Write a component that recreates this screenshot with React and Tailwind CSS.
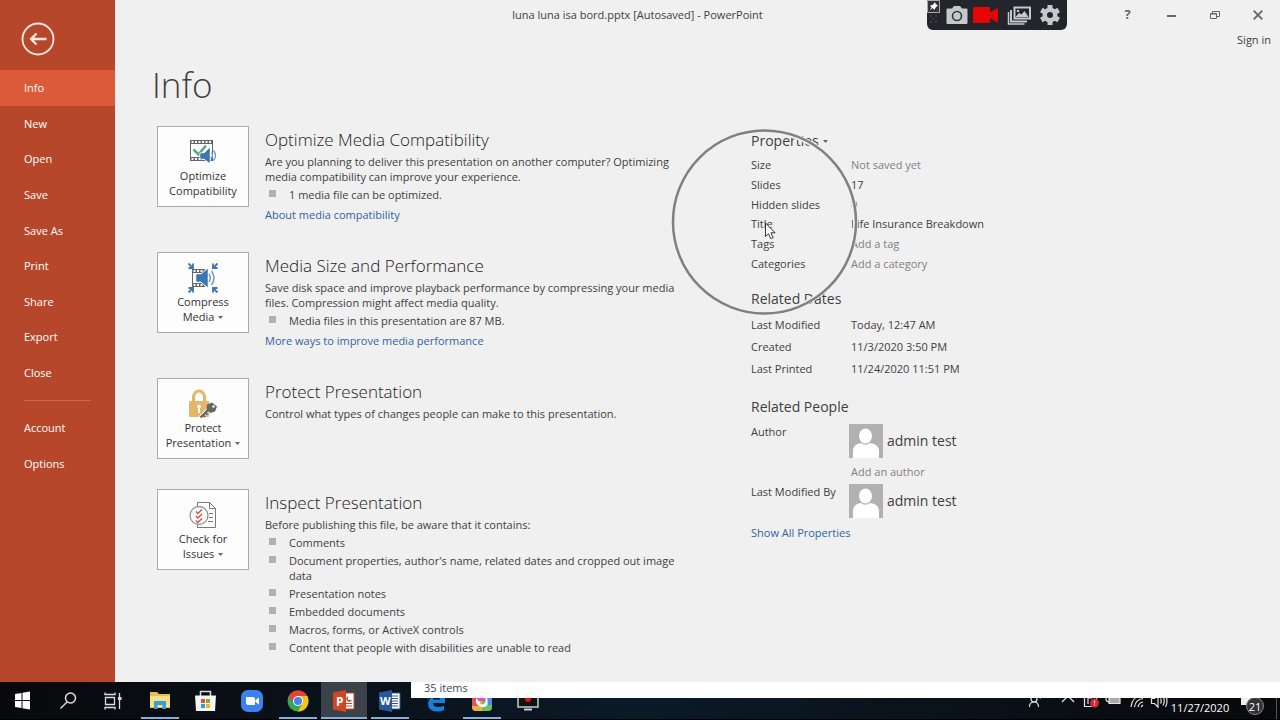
import clsx from "clsx";

const NAV_ITEMS = ["Info", "New", "Open", "Save", "Save As", "Print", "Share", "Export", "Close"];

const PROPERTIES = [
  { label: "Size", value: "Not saved yet", muted: true },
  { label: "Slides", value: "17" },
  { label: "Hidden slides", value: "0" },
  { label: "Title", value: "Life Insurance Breakdown" },
  { label: "Tags", value: "Add a tag", muted: true },
  { label: "Categories", value: "Add a category", muted: true },
];

const DATES = [
  { label: "Last Modified", value: "Today, 12:47 AM" },
  { label: "Created", value: "11/3/2020 3:50 PM" },
  { label: "Last Printed", value: "11/24/2020 11:51 PM" },
];

const OptimizeIcon = () => (
  <svg width="28" height="28" viewBox="0 0 28 28">
    <path d="M1.500 2.500h22v20h-22z" fill="#fff" stroke="#666" />
    <path d="M1 4h23M1 21h23" stroke="#666" strokeWidth="4" />
    <path d="M2.500 4h20M2.500 21h20" stroke="#fff" strokeWidth="2" strokeDasharray="2 1.500" />
    <path d="M4.500 11.500l5 5L17 7.500" fill="none" stroke="#5aa585" strokeWidth="2.500" />
    <path d="M11 15h4l6-6v17l-6-5h-4z" fill="#3a75b5" stroke="#fff" />
    <path d="M11.500 15.500h4l5-5v14l-5-4h-4z" fill="#3a75b5" />
    <path d="M22.500 14.500q2 3 0 6M24.500 12.500q4 5 0 10" fill="none" stroke="#6c9bce" strokeWidth="1.300" />
  </svg>
);

const CompressIcon = () => (
  <svg width="32" height="32" viewBox="0 0 32 32">
    <path d="M5.500 7.500h10v17h-10z" fill="#fff" stroke="#666" />
    <path d="M5 9h13M5 23h13" stroke="#666" strokeWidth="4" />
    <path d="M6.500 9h11M6.500 23h11" stroke="#fff" strokeWidth="2" strokeDasharray="2 1.500" />
    <path d="M9 12h5l7-6v20l-7-6H9z" fill="#3a75b5" stroke="#fff" />
    <path d="M9.500 12.500h5l6-5.500v18l-6-5.500h-5z" fill="#3a75b5" />
    <path d="M22 12q2.500 4 0 8M24.500 9q5 7 0 14" fill="none" stroke="#6c9bce" strokeWidth="1.500" />
    <g fill="none" stroke="#3a75b5" strokeWidth="1.800">
      <path d="M1.500 1.500l4 4M1.500 6H6V1.500" />
      <path d="M30.500 1.500l-4 4M26 1.500V6h4.500" />
      <path d="M1.500 30.500l4-4M1.500 26H6v4.500" />
      <path d="M30.500 30.500l-4-4M26 30.500V26h4.500" />
    </g>
  </svg>
);

const ProtectIcon = () => (
  <svg width="30" height="30" viewBox="0 0 30 30">
    <path d="M5.500 13V8.500a5.500 6.500 0 0 1 11 0V13" fill="none" stroke="#e6b566" strokeWidth="3" />
    <rect x="1" y="12" width="20" height="16" rx="1" fill="#e6b566" />
    <path d="M11 15.500a2 2 0 0 1 1 3.700V24h-2v-4.800a2 2 0 0 1 1-3.700z" fill="#fff" />
    <path d="M12 29l10-10" stroke="#fdfdfd" strokeWidth="4" />
    <path d="M12.500 28.500l9-9M15 26l2 2M17.500 23.500l2 2" stroke="#666" strokeWidth="2.400" />
    <path d="M19 15.500l5-2 5 4-2 5-5 1.500-3.500-3.500z" fill="#666" />
    <circle cx="25.500" cy="17.500" r="1.200" fill="#fff" />
  </svg>
);

const InspectIcon = () => (
  <svg width="28" height="28" viewBox="0 0 28 28" fill="none">
    <path d="M8.500 1.500h12l6 6v19h-18z" fill="#fff" stroke="#777" />
    <path d="M20.500 1.500v6h6M20 12.500h4M20 16.500h4M19 20.500h5" stroke="#777" />
    <circle cx="10" cy="14.500" r="9" fill="#fff" stroke="#8a949c" strokeWidth="1.300" />
    <path d="M7 10.500l1.800 2L13 8.500M7 15l1.800 2 4.200-4M7 19.500l1.800 2 4.200-4" stroke="#d9553c" strokeWidth="1.500" />
  </svg>
);

const Caret = () => (
  <svg className="mb-0.5 ml-1 inline-block" width="5" height="3" viewBox="0 0 5 3">
    <path d="M0 0h5L2.500 3z" fill="#666" />
  </svg>
);

const Section = ({ icon, lines, caret, title, text, items, link }) => (
  <section className="flex items-start gap-4">
    <button className="flex h-[81px] w-[92px] shrink-0 flex-col items-center justify-end border border-[#ababab] bg-[#fdfdfd] pb-2 leading-[15px] text-[#333]">
      <span className="flex h-8 items-center justify-center">{icon}</span>
      <span>{lines[0]}</span>
      <span>
        {lines[1]}
        {caret && <Caret />}
      </span>
    </button>
    <div className="min-w-0 flex-1">
      <h2 className="text-[17px] font-light leading-[28px] text-[#222]">{title}</h2>
      <p>{text}</p>
      {items && (
        <ul className="mt-[3px] flex flex-col gap-[3px]">
          {items.map((item) => (
            <li key={item} className="flex gap-[13px] pl-1">
              <span className="mt-[3px] size-[7px] shrink-0 bg-[#b1b1b1]" />
              <span>{item}</span>
            </li>
          ))}
        </ul>
      )}
      {link && (
        <a href="#" className="mt-[5px] block text-[#2f64a3]">
          {link}
        </a>
      )}
    </div>
  </section>
);

const Person = ({ children }) => (
  <div className="-ml-0.5 flex items-center gap-1 text-sm">
    <svg width="34" height="34" viewBox="0 0 34 34">
      <path d="M0 0h34v34H0z" fill="#b1b1b1" />
      <ellipse cx="16.500" cy="12" rx="6.500" ry="7.500" fill="#fff" />
      <path d="M4 34v-7q0-7 8-8 4.500 3.500 9 0 9 1 9 8v7z" fill="#fff" />
    </svg>
    <span>{children}</span>
  </div>
);

const DetailsTable = ({ rows, className }) => (
  <table className={clsx("text-left", className)}>
    <tbody>
      {rows.map(({ label, value, muted }) => (
        <tr key={label}>
          <th className="w-[100px] font-normal">{label}</th>
          <td className={clsx("whitespace-nowrap", muted && "text-[#808080]")}>{value}</td>
        </tr>
      ))}
    </tbody>
  </table>
);

const Sidebar = () => (
  <nav className="w-[115px] shrink-0 bg-[#b7472a] text-white">
    <div className="flex h-[70px] items-start pl-[21px] pt-[22px]">
      <button aria-label="Back">
        <svg width="34" height="34" viewBox="0 0 34 34" fill="none" stroke="#fbe9e4">
          <circle cx="17" cy="17" r="15.500" strokeWidth="1.800" />
          <path d="M25.500 17H10M15.500 11.500L10 17l5.500 5.500" strokeWidth="2.300" />
        </svg>
      </button>
    </div>
    <ul className="flex h-80 flex-col">
      {NAV_ITEMS.map((item) => (
        <li key={item} className="flex flex-1">
          <button className={clsx("flex-1 pl-6 text-left", item === "Info" && "bg-[#dc5939]")}>{item}</button>
        </li>
      ))}
    </ul>
    <hr className="mx-6 mb-2 mt-[10px] border-[#d0694f]" />
    <button className="block h-9 w-full pl-6 text-left">Account</button>
    <button className="block h-9 w-full pl-6 text-left">Options</button>
  </nav>
);

const WindowBar = () => (
  <header className="flex h-[29px] items-center">
    <h3 className="flex-1 pl-[54px] text-center text-[11px]">luna luna isa bord.pptx [Autosaved] - PowerPoint</h3>
    <div className="flex text-[#666]">
      <button className="w-[43px] text-[13px] font-bold" aria-label="Help">
        ?
      </button>
      <button className="flex w-11 items-center justify-center" aria-label="Minimize">
        <svg width="10" height="10" viewBox="0 0 10 10">
          <path d="M1 6h9" stroke="#666" strokeWidth="2" />
        </svg>
      </button>
      <button className="flex w-[43px] items-center justify-center" aria-label="Restore">
        <svg width="10" height="10" viewBox="0 0 10 10" fill="none" stroke="#666">
          <path d="M.5 3.500h6v5h-6zM2.500 3V1.500h7v5H7M.5 4h6" />
        </svg>
      </button>
      <button className="flex w-11 items-center justify-center" aria-label="Close">
        <svg width="10" height="10" viewBox="0 0 10 10">
          <path d="M.7.7l8.600 8.600M9.300.7L.7 9.300" stroke="#666" strokeWidth="1.800" />
        </svg>
      </button>
    </div>
  </header>
);

const RecorderBar = () => (
  <div className="absolute left-[927px] top-0 flex h-[30px] w-[140px] items-center justify-end gap-[9px] rounded-b-md bg-[#22262c] pr-[7px]">
    <svg className="absolute left-0 top-0" width="14" height="26" viewBox="0 0 14 26">
      <path d="M.5.500h12v12H.5z" fill="#333" stroke="#aaa" />
      <path d="M7 2l4 4-1.500.5-1.500 2L7.500 10 5.500 8 2.500 10.500 4.500 7.500 3 5.500l2.500-.5L7 3.500z" fill="#fff" />
      <path d="M3 16h2M8 16h2M5.500 19h2M3 22h2M8 22h2" stroke="#3a3f45" strokeWidth="2" />
    </svg>
    <button aria-label="Take screenshot">
      <svg width="22" height="20" viewBox="0 0 22 20">
        <path d="M1.500 3.500H6L8 1h6l2 2.500h4.500q1 0 1 1V18q0 1-1 1h-19q-1 0-1-1V4.500q0-1 1-1z" fill="#c6c8ca" />
        <circle cx="11" cy="11" r="4.500" fill="none" stroke="#33373c" strokeWidth="1.600" />
      </svg>
    </button>
    <button aria-label="Record" className="-ml-1">
      <svg width="25" height="18" viewBox="0 0 25 18">
        <path d="M1 1h15q1 0 1 1v4l8-4v15l-8-5v4q0 1-1 1H1q-1 0-1-1V2q0-1 1-1z" fill="#e60505" />
      </svg>
    </button>
    <button aria-label="Gallery">
      <svg width="24" height="20" viewBox="0 0 24 20" fill="none" stroke="#c6c8ca" strokeWidth="2">
        <path d="M7.500 2.500H23v11H7.500zM4 5v11.500h16" />
        <path d="M1.500 7v12h16" strokeWidth="1.500" />
        <path d="M8.500 12l3.500-4 2.500 1.500L17.500 6l4 6z" fill="#c6c8ca" stroke="none" />
        <circle cx="11" cy="6" r="1.300" fill="#c6c8ca" stroke="none" />
      </svg>
    </button>
    <button aria-label="Settings">
      <svg width="20" height="20" viewBox="0 0 20 20">
        <g stroke="#c6c8ca" strokeWidth="5">
          <path d="M10 0v20M1.300 5l17.400 10M1.300 15L18.700 5" />
        </g>
        <circle cx="10" cy="10" r="7.500" fill="#c6c8ca" />
        <circle cx="10" cy="10" r="3" fill="#22262c" />
      </svg>
    </button>
  </div>
);

const PointerHighlight = () => (
  <svg className="pointer-events-none absolute left-[670px] top-[128px]" width="188" height="188" viewBox="0 0 188 188" fill="none">
    <circle cx="94.500" cy="94" r="91" stroke="#f0f0f0" strokeWidth="5" />
    <circle cx="94.500" cy="94" r="91.500" stroke="#808080" strokeWidth="2.500" />
    <path d="M95.500 95v13.500l3-2.800 2.300 5 2.400-1.100-2.300-4.800h4.200z" fill="#fff" stroke="#333" />
  </svg>
);

const TASKS = [
  {
    name: "Start",
    art: <path d="M4 5l6.500-1v7H4zM11.500 3.800L19 2.500V11h-7.500zM4 12h6.500v7L4 18zM11.500 12H19v8.500l-7.500-1.300z" fill="#fff" />,
  },
  {
    name: "Search",
    art: (
      <g fill="none" stroke="#ddd" strokeWidth="1.500">
        <circle cx="14.500" cy="9" r="5" />
        <path d="M11 13l-6.500 6.500" />
      </g>
    ),
  },
  {
    name: "Task View",
    art: (
      <g fill="none" stroke="#ddd" strokeWidth="1.300">
        <path d="M3.500 8.500h9v7h-9zM3 3.500v2h10v-2M3 20.500v-2h10v2M17.500 4v16" />
        <path d="M16 9.500h3.500" strokeWidth="3" />
      </g>
    ),
  },
  {
    name: "File Explorer",
    open: true,
    art: (
      <>
        <path d="M2 3h7l2 2h11v14H2z" fill="#e9bf53" />
        <path d="M2 7h20v11H2z" fill="#fbe08c" />
        <path d="M6 12h12v8h-3.500v-4h-5v4H6z" fill="#36a0da" />
      </>
    ),
  },
  {
    name: "Microsoft Store",
    art: (
      <>
        <path d="M6.500 8V2.500h10V8" fill="none" stroke="#ddd" strokeWidth="1.500" />
        <path d="M1 6.500h21L21 22H2z" fill="#f5f5f5" />
        <path d="M7 10h4v4H7z" fill="#e8502c" />
        <path d="M12 10h4v4h-4z" fill="#7ab42c" />
        <path d="M7 15h4v4H7z" fill="#2a9fd8" />
        <path d="M12 15h4v4h-4z" fill="#f3b51d" />
      </>
    ),
  },
  {
    name: "Zoom",
    art: (
      <>
        <rect x="1" y="1" width="22" height="22" rx="7" fill="#3b82ee" />
        <path d="M6 8h7q2 0 2 2v6H8q-2 0-2-2zM15.500 11L19 8.500v7L15.500 13z" fill="#fff" />
      </>
    ),
  },
  {
    name: "Chrome",
    open: true,
    art: (
      <>
        <circle cx="12" cy="12" r="10.500" fill="#35a852" />
        <path d="M12 12L2.900 6.700A10.500 10.500 0 0 1 21.100 6.700z" fill="#e64235" />
        <path d="M12 7h9.300A10.500 10.500 0 0 1 12 22.500L16.500 14z" fill="#fbc116" />
        <path d="M2.900 6.700L7.500 14.500 12 12 12 7z" fill="#e64235" />
        <circle cx="12" cy="12" r="5" fill="#fff" />
        <circle cx="12" cy="12" r="4" fill="#4285f4" />
      </>
    ),
  },
  {
    name: "PowerPoint",
    open: true,
    active: true,
    art: (
      <>
        <path d="M12 4h10v16H12z" fill="#fff" stroke="#cf4526" />
        <path d="M16 7a3 3 0 1 0 4 4h-4z" fill="#cf4526" />
        <path d="M14 14.500h6M14 17h6" stroke="#cf4526" />
        <path d="M1 3.500L14 1v22L1 20.500z" fill="#cf4526" />
        <text x="4" y="16.500" fill="#fff" fontSize="12" fontWeight="700">
          P
        </text>
      </>
    ),
  },
  {
    name: "Word",
    open: true,
    art: (
      <>
        <path d="M12 4h10v16H12z" fill="#fff" stroke="#2b579a" />
        <path d="M14 7h6M14 9.500h6M14 12h6M14 14.500h6M14 17h6" stroke="#2b579a" />
        <path d="M1 3.500L14 1v22L1 20.500z" fill="#2b579a" />
        <text x="2" y="16" fill="#fff" fontSize="11" fontWeight="700">
          W
        </text>
      </>
    ),
  },
  {
    name: "Edge",
    art: <path d="M3 11Q5 2 13 2q8 0 8 9v3H9q0 4 5 4 3 0 6-1.500V21q-3 1.500-7 1.500Q4 22.500 4 14q1-5 6-7-1 2-1 3.500h7Q15.500 6 12 6 7 6 3 11z" fill="#1382d8" />,
  },
  {
    name: "Creative Cloud",
    open: true,
    art: (
      <>
        <rect x="2" y="1" width="20" height="21" rx="4" fill="#d94fd0" />
        <path d="M2 12h10v10H6q-4 0-4-4z" fill="#e9b53c" />
        <path d="M12 12h10v6q0 4-4 4h-6z" fill="#6ac25a" />
        <path d="M2 9h6v8H2z" fill="#e8505a" />
        <path d="M18 8h4v8h-4z" fill="#4f8df0" />
        <path d="M7 10a5 5 0 1 0 9-1M9 12a4 4 0 0 0 8 2" fill="none" stroke="#fff" strokeWidth="2" />
      </>
    ),
  },
  {
    name: "Screen Recorder",
    art: (
      <>
        <path d="M2 3h20v15H2z" fill="#111" stroke="#ccc" strokeWidth="1.500" />
        <circle cx="12" cy="10" r="3" fill="#e01010" />
        <path d="M8 20.500h8" stroke="#ccc" strokeWidth="2" />
      </>
    ),
  },
];

const TrayIcon = ({ label, children }) => (
  <button className="flex w-[23px] justify-center" aria-label={label}>
    <svg width="18" height="18" viewBox="0 0 18 18" fill="none" stroke="#e5e5e5" strokeWidth="1.200">
      {children}
    </svg>
  </button>
);

const Taskbar = () => (
  <footer className="relative flex h-[38px] items-stretch border-b border-black bg-gradient-to-r from-[#08090b] via-[#0a1a28] to-[#08090b] text-white">
    {TASKS.map(({ name, art, open, active }) => (
      <button
        key={name}
        aria-label={name}
        className={clsx("flex w-[46px] shrink-0 flex-col items-center justify-between pt-[7px] first:w-[45px]", active && "bg-[#3c4249]")}
      >
        <svg width="24" height="24" viewBox="0 0 24 24">
          {art}
        </svg>
        <span className={clsx("h-0.5", active ? "w-[46px]" : "w-[38px]", open && "bg-[#84b0e0]")} />
      </button>
    ))}
    <div className="ml-auto flex items-center">
      <TrayIcon label="People">
        <circle cx="11" cy="7" r="3" />
        <path d="M6.500 15q0-5 4.500-5t4.500 5M15 4.500q2 0 3 2" />
      </TrayIcon>
      <span className="w-3" />
      <TrayIcon label="Show hidden icons">
        <path d="M4 10l6-6 6 6" />
      </TrayIcon>
      <TrayIcon label="Security">
        <path d="M3.500 2.500h12v12h-12zM7 6v6M7 6h4" />
        <circle cx="13.500" cy="11" r="4.500" fill="#dd2030" stroke="none" />
        <path d="M13.500 8.500v3M13.500 12.500v1.200" />
      </TrayIcon>
      <TrayIcon label="Battery">
        <path d="M5 4.500h11v7H5z" fill="#aaa" />
        <path d="M2 3v4q0 3 4 3" />
      </TrayIcon>
      <TrayIcon label="Network">
        <path d="M4 15Q5 4 16 3M7.500 15q1-7.500 8.500-8.500M11 15q1-4.500 5-5M14 15l2-2" />
      </TrayIcon>
      <TrayIcon label="Volume">
        <path d="M1.500 6.500h3L8 3v12l-3.500-3.500h-3zM10.500 6.500q1.500 2.500 0 5M13 4.500q2.500 4.500 0 9M15.500 3q3 6 0 12" />
      </TrayIcon>
      <time className="w-[60px] self-end pb-1 text-center leading-[15px]">11/27/2020</time>
      <button className="relative ml-1 flex h-full w-[42px] items-center" aria-label="Notifications">
        <svg className="ml-1.5" width="18" height="18" viewBox="0 0 18 18">
          <path d="M1 0h15v13h-5l-4 4v-4H1z" fill="#eee" />
        </svg>
        <span className="absolute bottom-1 right-3 flex size-[18px] items-center justify-center rounded-full border border-[#888] bg-[#333] text-[11px]">
          21
        </span>
      </button>
      <span className="mr-[3px] h-full w-px bg-[#555]" />
    </div>
    {/* status bar of the window peeking out from behind */}
    <div className="absolute left-[411px] right-0 top-0 h-4 bg-white pl-[13px] leading-[12px] text-[#3b4763]">35 items</div>
  </footer>
);

const App = () => {
  return (
    <div className="relative flex min-h-screen flex-col bg-[#f0f0f0] font-['Open_Sans','Noto_Sans',sans-serif] text-[11px] leading-[15px] text-[#404040]">
      <div className="flex flex-1">
        <Sidebar />
        <div className="min-w-0 flex-1">
          <WindowBar />
          <div className="flex h-5 items-center justify-end pr-[9px]">
            <a href="#">Sign in</a>
          </div>
          <h1 className="h-[77px] pl-[37px] pt-[11px] text-[35px] font-light leading-[50px]">Info</h1>
          <main className="flex items-start gap-16 pb-4 pl-[42px] pr-6">
            <div className="flex w-[530px] flex-col gap-[30px]">
              <Section
                icon={<OptimizeIcon />}
                lines={["Optimize", "Compatibility"]}
                title="Optimize Media Compatibility"
                text="Are you planning to deliver this presentation on another computer? Optimizing media compatibility can improve your experience."
                items={["1 media file can be optimized."]}
                link="About media compatibility"
              />
              <Section
                icon={<CompressIcon />}
                lines={["Compress", "Media"]}
                caret
                title="Media Size and Performance"
                text="Save disk space and improve playback performance by compressing your media files. Compression might affect media quality."
                items={["Media files in this presentation are 87 MB."]}
                link="More ways to improve media performance"
              />
              <Section
                icon={<ProtectIcon />}
                lines={["Protect", "Presentation"]}
                caret
                title="Protect Presentation"
                text="Control what types of changes people can make to this presentation."
              />
              <Section
                icon={<InspectIcon />}
                lines={["Check for", "Issues"]}
                caret
                title="Inspect Presentation"
                text="Before publishing this file, be aware that it contains:"
                items={[
                  "Comments",
                  "Document properties, author's name, related dates and cropped out image data",
                  "Presentation notes",
                  "Embedded documents",
                  "Macros, forms, or ActiveX controls",
                  "Content that people with disabilities are unable to read",
                ]}
              />
            </div>
            <aside className="flex-1">
              <button className="block pt-px text-[14px] leading-[28px]">
                Properties
                <Caret />
              </button>
              <DetailsTable rows={PROPERTIES} className="h-[118px]" />
              <h3 className="mt-3 text-[14px] leading-[28px]">Related Dates</h3>
              <DetailsTable rows={DATES} className="h-[67px]" />
              <h3 className="mt-[13px] text-[14px] leading-[28px]">Related People</h3>
              <div className="flex pt-[3px]">
                <span className="w-[100px]">Author</span>
                <div>
                  <Person>admin test</Person>
                  <button className="flex h-[26px] items-center text-[#808080]">Add an author</button>
                </div>
              </div>
              <div className="flex">
                <span className="w-[100px]">Last Modified By</span>
                <Person>admin test</Person>
              </div>
              <a href="#" className="mt-[7px] block text-[#2f64a3]">
                Show All Properties
              </a>
            </aside>
          </main>
        </div>
      </div>
      <Taskbar />
      <RecorderBar />
      <PointerHighlight />
    </div>
  );
};

export default App;
